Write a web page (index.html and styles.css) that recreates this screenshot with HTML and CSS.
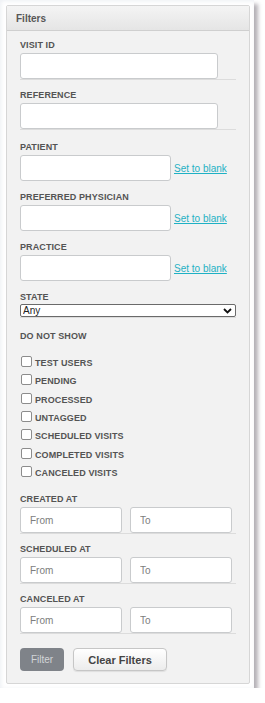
FILE: index.html
```html
<!DOCTYPE html>
<html lang="en">
<head>
    <meta charset="UTF-8">
    <meta name="viewport" content="width=device-width, initial-scale=1.0">
    <title>Filters</title>
<link rel="stylesheet" href="styles.css">
</head>
<body>
    <div class="frame">
        <div class="panel">
            <div class="panel-head">Filters</div>

            <form class="panel-body" onsubmit="return false">
                <div class="field ruled first">
                    <label class="label">Visit ID</label>
                    <input type="text" class="text wide">
                </div>

                <div class="field ruled">
                    <label class="label">Reference</label>
                    <input type="text" class="text wide">
                </div>

                <div class="field gap11">
                    <label class="label">Patient</label>
                    <div class="with-link">
                        <input type="text" class="text short">
                        <a href="#" class="blank">Set to blank</a>
                    </div>
                </div>

                <div class="field">
                    <label class="label">Preferred Physician</label>
                    <div class="with-link">
                        <input type="text" class="text short">
                        <a href="#" class="blank">Set to blank</a>
                    </div>
                </div>

                <div class="field">
                    <label class="label">Practice</label>
                    <div class="with-link">
                        <input type="text" class="text short">
                        <a href="#" class="blank">Set to blank</a>
                    </div>
                </div>

                <div class="field ruled">
                    <label class="label tight">State</label>
                    <div class="select-wrap">
                        <select class="state">
                            <option>Any</option>
                            <option>Pending</option>
                            <option>Processed</option>
                        </select>
                        <svg class="chevron" width="9" height="6" viewBox="0 0 9 6"><path d="M1 1 L4.5 4.5 L8 1" fill="none" stroke="#111" stroke-width="1.8"/></svg>
                    </div>
                </div>

                <div class="field gap12">
                    <label class="label">Do not show</label>
                    <ul class="checks">
                        <li><input type="checkbox" id="c1"><label for="c1">Test users</label></li>
                        <li><input type="checkbox" id="c2"><label for="c2">Pending</label></li>
                        <li><input type="checkbox" id="c3"><label for="c3">Processed</label></li>
                        <li><input type="checkbox" id="c4"><label for="c4">Untagged</label></li>
                        <li><input type="checkbox" id="c5"><label for="c5">Scheduled visits</label></li>
                        <li><input type="checkbox" id="c6"><label for="c6">Completed visits</label></li>
                        <li><input type="checkbox" id="c7"><label for="c7">Canceled visits</label></li>
                    </ul>
                </div>

                <div class="field ruled gap11">
                    <label class="label">Created at</label>
                    <div class="range">
                        <input type="text" class="text" placeholder="From">
                        <input type="text" class="text" placeholder="To">
                    </div>
                </div>

                <div class="field ruled">
                    <label class="label">Scheduled at</label>
                    <div class="range">
                        <input type="text" class="text" placeholder="From">
                        <input type="text" class="text" placeholder="To">
                    </div>
                </div>

                <div class="field ruled">
                    <label class="label">Canceled at</label>
                    <div class="range">
                        <input type="text" class="text" placeholder="From">
                        <input type="text" class="text" placeholder="To">
                    </div>
                </div>

                <div class="actions">
                    <button type="submit" class="btn-filter">Filter</button>
                    <button type="reset" class="btn-clear">Clear Filters</button>
                </div>
            </form>
        </div>
    </div>
</body>
</html>
```

FILE: styles.css
```css
body{
    margin: 0;
    background: #fff;
    font-family: "Liberation Sans", Arial, sans-serif;
}

/* white card with the drop shadow round the panel */
.frame{
    width: 244px;
    padding: 5px 4px 4px 6px;
    background: #fff;
    box-shadow: 4px 4px 4px rgba(70, 60, 75, 0.4), inset 1px 1px 4px rgba(200, 210, 220, 0.35);
}

.panel{
    border: 1px solid #d6d6d6;
    border-radius: 2px;
    background: #f2f2f2;
}

.panel-head{
    height: 24px;
    line-height: 25px;
    padding-left: 9px;
    font-size: 10px;
    font-weight: bold;
    color: #575757;
    background: linear-gradient(#f4f4f4, #e5e5e5);
    border-bottom: 1px solid #cfcfcf;
}

.panel-body{
    padding: 0 13px 12px;
    margin: 0;
}

.field{
    padding-top: 10px;
}
.field.first{
    padding-top: 8px;
}
.field.ruled{
    border-bottom: 1px solid #dcdcdc;
}
.ruled + .field.ruled{
    padding-top: 9px;
}
.field.gap11{
    padding-top: 11px;
}
.field.gap12{
    padding-top: 12px;
}

.label{
    display: block;
    font-size: 9px;
    line-height: 12px;
    font-weight: bold;
    text-transform: uppercase;
    color: #545454;
    letter-spacing: 0.1px;
    margin-bottom: 2px;
}
.label.tight{
    margin-bottom: 1px;
}

.text{
    display: block;
    box-sizing: border-box;
    height: 26px;
    border: 1px solid #c9cbcd;
    border-radius: 3px;
    background: #fff;
    padding: 0 9px;
    font-family: inherit;
    font-size: 10px;
    color: #333;
    outline: none;
}
.text::placeholder{
    color: #7d7d7d;
}
.wide{
    width: 198px;
}
.short{
    width: 151px;
}

.with-link{
    display: flex;
    align-items: center;
}
.blank{
    margin-left: 3px;
    font-size: 10px;
    color: #1eb1c4;
    text-decoration: underline;
}

.select-wrap{
    position: relative;
}
.state{
    display: block;
    width: 100%;
    box-sizing: border-box;
    height: 13px;
    padding: 0 2px;
    margin: 0;
    border: 1px solid #6a6a6a;
    border-radius: 2px;
    background: #fff;
    font-family: inherit;
    font-size: 10px;
    line-height: 11px;
    color: #222;
    appearance: none;
    -webkit-appearance: none;
}
.chevron{
    position: absolute;
    right: 4px;
    top: 4px;
    pointer-events: none;
}

.checks{
    list-style: none;
    margin: 12px 0 0;
    padding: 0;
}
.checks li{
    display: flex;
    align-items: center;
    height: 18.33px;
}
.checks input{
    appearance: none;
    -webkit-appearance: none;
    width: 11px;
    height: 11px;
    margin: 0 3px 3px 1px;
    border: 1px solid #8c8c8c;
    border-radius: 2px;
    background: #fff;
    box-sizing: border-box;
}
.checks input:checked{
    background: #1eb1c4;
}
.checks label{
    font-size: 9px;
    font-weight: bold;
    text-transform: uppercase;
    color: #545454;
    letter-spacing: 0.1px;
}

.range{
    display: flex;
    gap: 8px;
}
.range .text{
    width: 102px;
}

.actions{
    display: flex;
    gap: 9px;
    margin-top: 14px;
}
.btn-filter{
    width: 44px;
    height: 23px;
    border: none;
    border-radius: 4px;
    background: #7f8389;
    color: #d2d5d8;
    font-family: inherit;
    font-size: 10px;
    cursor: pointer;
}
.btn-clear{
    width: 94px;
    height: 23px;
    border: 1px solid #c6c6c6;
    border-radius: 4px;
    background: linear-gradient(#ffffff, #ececec);
    box-shadow: 0 1px 1px rgba(0, 0, 0, 0.08);
    color: #444;
    font-family: inherit;
    font-size: 11px;
    font-weight: bold;
    cursor: pointer;
}
```
